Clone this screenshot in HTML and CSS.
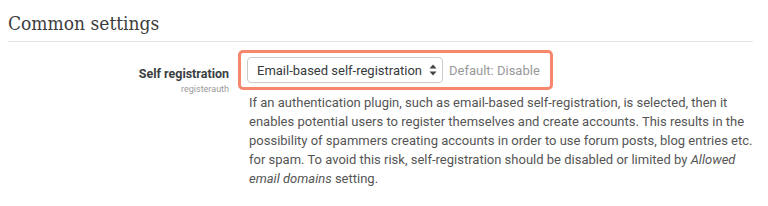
FILE: index.html
```html
<!DOCTYPE html>
<html lang="en">
<head>
  <meta charset="UTF-8">
  <title>Common settings</title>
  <link rel="stylesheet" href="styles.css">
</head>
<body>
  <div id="settings">
    <h3 class="section-title">Common settings</h3>
    <div class="setting-row">
      <div class="setting-label">
        <label for="registerauth">Self registration</label>
        <span class="setting-name">registerauth</span>
      </div>
      <div class="setting-body">
        <div class="highlight">
          <div class="select-wrap">
            <select id="registerauth" class="select">
              <option>Email-based self-registration</option>
            </select>
            <svg class="select-arrows" width="8" height="12" viewBox="0 0 8 12">
              <path d="M4 0.5 L7.5 4.5 H0.5 Z M4 11.5 L7.5 7.5 H0.5 Z" fill="#444444"/>
            </svg>
          </div>
          <span class="default">Default: Disable</span>
        </div>
        <p class="description">If an authentication plugin, such as email-based self-registration, is selected, then it enables potential users to register themselves and create accounts. This results in the possibility of spammers creating accounts in order to use forum posts, blog entries etc. for spam. To avoid this risk, self-registration should be disabled or limited by <em>Allowed email domains</em> setting.</p>
      </div>
    </div>
  </div>
</body>
</html>
```

FILE: styles.css
```css
body {
  margin: 0;
  background-color: #ffffff;
  font-family: Roboto, "Liberation Sans", sans-serif;
  color: #373a3c;
}

#settings {
  padding: 0 15px 0 8px;
}

.section-title {
  font-family: "DejaVu Serif Condensed", "DejaVu Serif", serif;
  font-stretch: condensed;
  font-weight: normal;
  font-size: 19px;
  color: #3d3d3d;
  margin: 0;
  padding: 13px 0 7px;
  line-height: 21px;
  border-bottom: 1px solid #e6e6e6;
}

.setting-row {
  display: flex;
  margin-top: 8px;
}

.setting-label {
  flex-shrink: 0;
  width: 230px;
  padding-right: 9px;
  box-sizing: border-box;
  display: flex;
  flex-direction: column;
  align-items: flex-end;
  padding-top: 16px;
}

.setting-label label {
  font-size: 12.5px;
  font-weight: bold;
  color: #3b3e41;
  line-height: 16px;
}

.setting-name {
  font-size: 9px;
  color: #9a9a9a;
  line-height: 14px;
}

.setting-body {
  flex: 1;
  min-width: 0;
}

.highlight {
  display: inline-flex;
  align-items: center;
  width: 315px;
  height: 40px;
  box-sizing: border-box;
  border: 3px solid #f7876d;
  border-radius: 5px;
  padding: 0 6px;
}

.select-wrap {
  position: relative;
  display: flex;
}

.select {
  appearance: none;
  -webkit-appearance: none;
  width: 196px;
  height: 26px;
  font-family: Roboto, sans-serif;
  font-size: 13px;
  color: #373a3c;
  background-color: #ffffff;
  border: 1px solid #cccccc;
  border-radius: 4px;
  padding: 0 20px 0 9px;
}

.select-arrows {
  position: absolute;
  right: 6px;
  top: 7px;
  pointer-events: none;
}

.default {
  font-size: 13px;
  color: #999999;
  margin-left: 6px;
}

.description {
  margin: 3px 0 0 11px;
  width: 512px;
  font-size: 13px;
  line-height: 19px;
  color: #555555;
}
```
